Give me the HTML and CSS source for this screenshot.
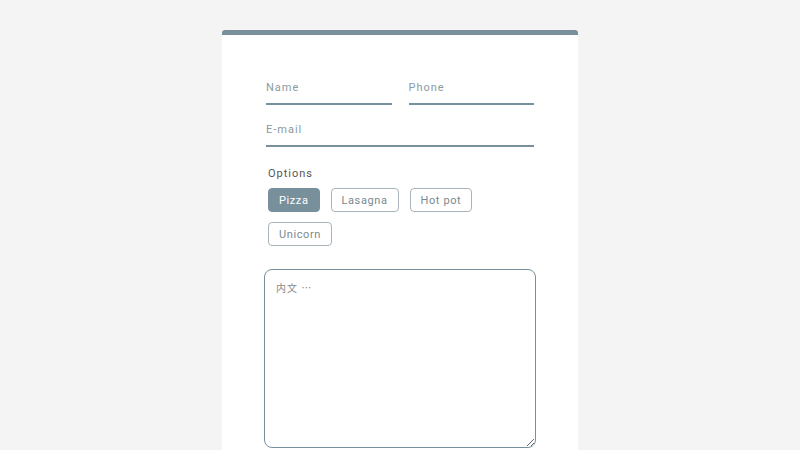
FILE: index.html
```html
<!DOCTYPE html>
<html lang="zh">
<head>
  <meta charset="UTF-8">
  <meta name="viewport" content="width=device-width, initial-scale=1.0">
  <title>Order form</title>
  <link rel="stylesheet" href="styles.css">
</head>
<body>
  <form class="card">
    <div class="row">
      <input class="line" type="text" placeholder="Name">
      <input class="line" type="text" placeholder="Phone">
    </div>
    <div class="row">
      <input class="line" type="email" placeholder="E-mail">
    </div>
    <div class="options">
      <div class="options-title">Options</div>
      <div class="chips">
        <button type="button" class="chip active">Pizza</button>
        <button type="button" class="chip">Lasagna</button>
        <button type="button" class="chip">Hot pot</button>
        <button type="button" class="chip">Unicorn</button>
      </div>
    </div>
    <textarea class="body-text" placeholder="内文 …"></textarea>
  </form>
</body>
</html>
```

FILE: styles.css
```css
:root { --accent: #78909c; --bg: #f4f4f4; }
body { margin:0; background:var(--bg); font-family: Roboto, "Noto Sans", sans-serif;
       display:flex; justify-content:center; min-height:100vh; }
.card { width:356px; margin-top:30px; background:#fff; border-top:5px solid var(--accent);
        border-radius:3px 3px 0 0; padding:44px 44px 40px; box-sizing:border-box;
        display:flex; flex-direction:column; }
.row { display:flex; gap:17px; margin-bottom:16px; }
.row + .row { margin-bottom:0; }
.line { flex:1; min-width:0; border:none; border-bottom:2px solid var(--accent);
        padding:2px 0 9px; font-family:inherit; font-size:11px; letter-spacing:1px;
        color:#455a64; outline:none; background:none; }
.line::placeholder { color:#8a9aa2; }
.options { padding:20px 2px 0; }
.options-title { font-size:11px; letter-spacing:1px; color:#555; margin-bottom:8px; }
.chips { display:flex; flex-wrap:wrap; gap:10px 11px; width:220px; }
.chip { height:24px; padding:0 10px; border:1px solid #a9b4ba; border-radius:4px;
        background:#fff; color:#7a8990; font-family:inherit; font-size:11px;
        letter-spacing:0.6px; cursor:pointer; }
.chip.active { background:var(--accent); border-color:var(--accent); color:#fff; }
.body-text { margin:23px -2px 0; height:179px; border:1px solid var(--accent);
             border-radius:8px; padding:10px 11px; font-family:inherit; font-size:10px;
             letter-spacing:1px; box-sizing:border-box; outline:none; }
.body-text::placeholder { color:#888; font-family:"Noto Sans CJK SC", sans-serif; }
```
